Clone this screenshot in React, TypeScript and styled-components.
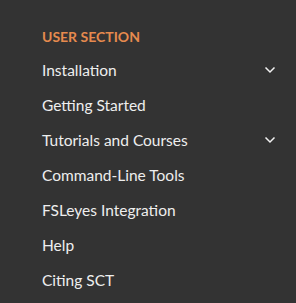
import React from "react";
import styled, { createGlobalStyle } from "styled-components";

const GlobalStyle = createGlobalStyle`
  html, body {
    margin: 0;
    padding: 0;
    background: #333333;
  }
  body {
    font-family: Lato, "Open Sans", sans-serif;
  }
`;

interface NavItem {
  label: string;
  expandable?: boolean;
}

const items: NavItem[] = [
  { label: "Installation", expandable: true },
  { label: "Getting Started" },
  { label: "Tutorials and Courses", expandable: true },
  { label: "Command-Line Tools" },
  { label: "FSLeyes Integration" },
  { label: "Help" },
  { label: "Citing SCT" },
];

function Chevron() {
  return (
    <svg width="12" height="8" viewBox="0 0 12 8" fill="none">
      <path d="M1.5 1.5L6 6L10.5 1.5" stroke="#f2f2f2" strokeWidth="1.5" />
    </svg>
  );
}

export default function App() {
  return (
    <>
      <GlobalStyle />
      <s.Sidebar>
        <s.Caption>USER SECTION</s.Caption>
        <s.List>
          {items.map(({ label, expandable }) => (
            <s.Item key={label}>
              <s.Label>{label}</s.Label>
              {expandable && (
                <s.Toggle>
                  <Chevron />
                </s.Toggle>
              )}
            </s.Item>
          ))}
        </s.List>
      </s.Sidebar>
    </>
  );
}

const s = {
  Sidebar: styled.nav`
    display: flex;
    flex-direction: column;

    width: 296px;
    height: 303px;
    box-sizing: border-box;
    padding: 27px 20px 0 42px;

    background: #333333;
  `,
  Caption: styled.div`
    height: 20px;
    line-height: 20px;

    color: #e68a4e;
    font-size: 14px;
    font-weight: 700;
  `,
  List: styled.ul`
    margin: 5px 0 0;
    padding: 0;
    list-style: none;
  `,
  Item: styled.li`
    display: flex;
    align-items: center;
    justify-content: space-between;

    height: 35px;
  `,
  Label: styled.span`
    color: #eeeeee;
    font-size: 15.5px;
  `,
  Toggle: styled.span`
    display: flex;
    align-items: center;
  `,
};
